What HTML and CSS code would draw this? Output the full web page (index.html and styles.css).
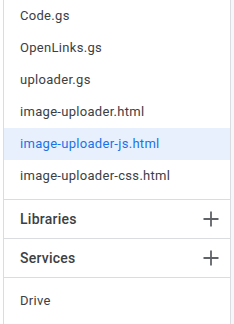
FILE: index.html
```html
<!DOCTYPE html>
<html>
<head>
<meta charset="utf-8">
<link rel="stylesheet" href="styles.css">
</head>
<body>
<div class="page">
  <div class="gutter"></div>
  <div class="panel">
    <ul class="files">
      <li class="file">Code.gs</li>
      <li class="file">OpenLinks.gs</li>
      <li class="file">uploader.gs</li>
      <li class="file">image-uploader.html</li>
      <li class="file active">image-uploader-js.html</li>
      <li class="file">image-uploader-css.html</li>
    </ul>
    <div class="section">
      <span class="section-title">Libraries</span>
      <svg class="plus" viewBox="0 0 16 16" width="16" height="16"><path d="M8 0.5v15M0.5 8h15" stroke="#5f6368" stroke-width="1.8" fill="none"/></svg>
    </div>
    <div class="section">
      <span class="section-title">Services</span>
      <svg class="plus" viewBox="0 0 16 16" width="16" height="16"><path d="M8 0.5v15M0.5 8h15" stroke="#5f6368" stroke-width="1.8" fill="none"/></svg>
    </div>
    <ul class="files services">
      <li class="file">Drive</li>
    </ul>
  </div>
  <div class="side"></div>
</div>
</body>
</html>
```
FILE: styles.css
```css
html, body {
  margin: 0;
  padding: 0;
  background: #ffffff;
}
body {
  font-family: Roboto, "Liberation Sans", sans-serif;
  color: #3c4043;
}
.page {
  display: flex;
  height: 324px;
  width: 234px;
}
.gutter {
  width: 3px;
  flex: none;
}
.panel {
  width: 226px;
  flex: none;
  border-left: 1px solid #dadce0;
  border-right: 1px solid #dadce0;
  display: flex;
  flex-direction: column;
}
.side {
  flex: 1;
  background: #f6f7f8;
}
.files {
  list-style: none;
  margin: 0;
  padding: 0 0 7px 0;
  border-bottom: 1px solid #dadce0;
}
.file {
  height: 32px;
  line-height: 32px;
  padding-left: 16px;
  font-size: 13px;
  letter-spacing: 0.3px;
}
.file.active {
  background: #e8f0fe;
  color: #1a73e8;
}
.section {
  height: 38px;
  display: flex;
  align-items: center;
  justify-content: space-between;
  padding: 0 11px 0 16px;
  border-bottom: 1px solid #dadce0;
}
.section-title {
  font-size: 14px;
  font-weight: 500;
  letter-spacing: 0.25px;
  color: #3c4043;
}
.plus {
  display: block;
}
.services {
  border-bottom: none;
  padding: 7px 0 0 0;
}
```
